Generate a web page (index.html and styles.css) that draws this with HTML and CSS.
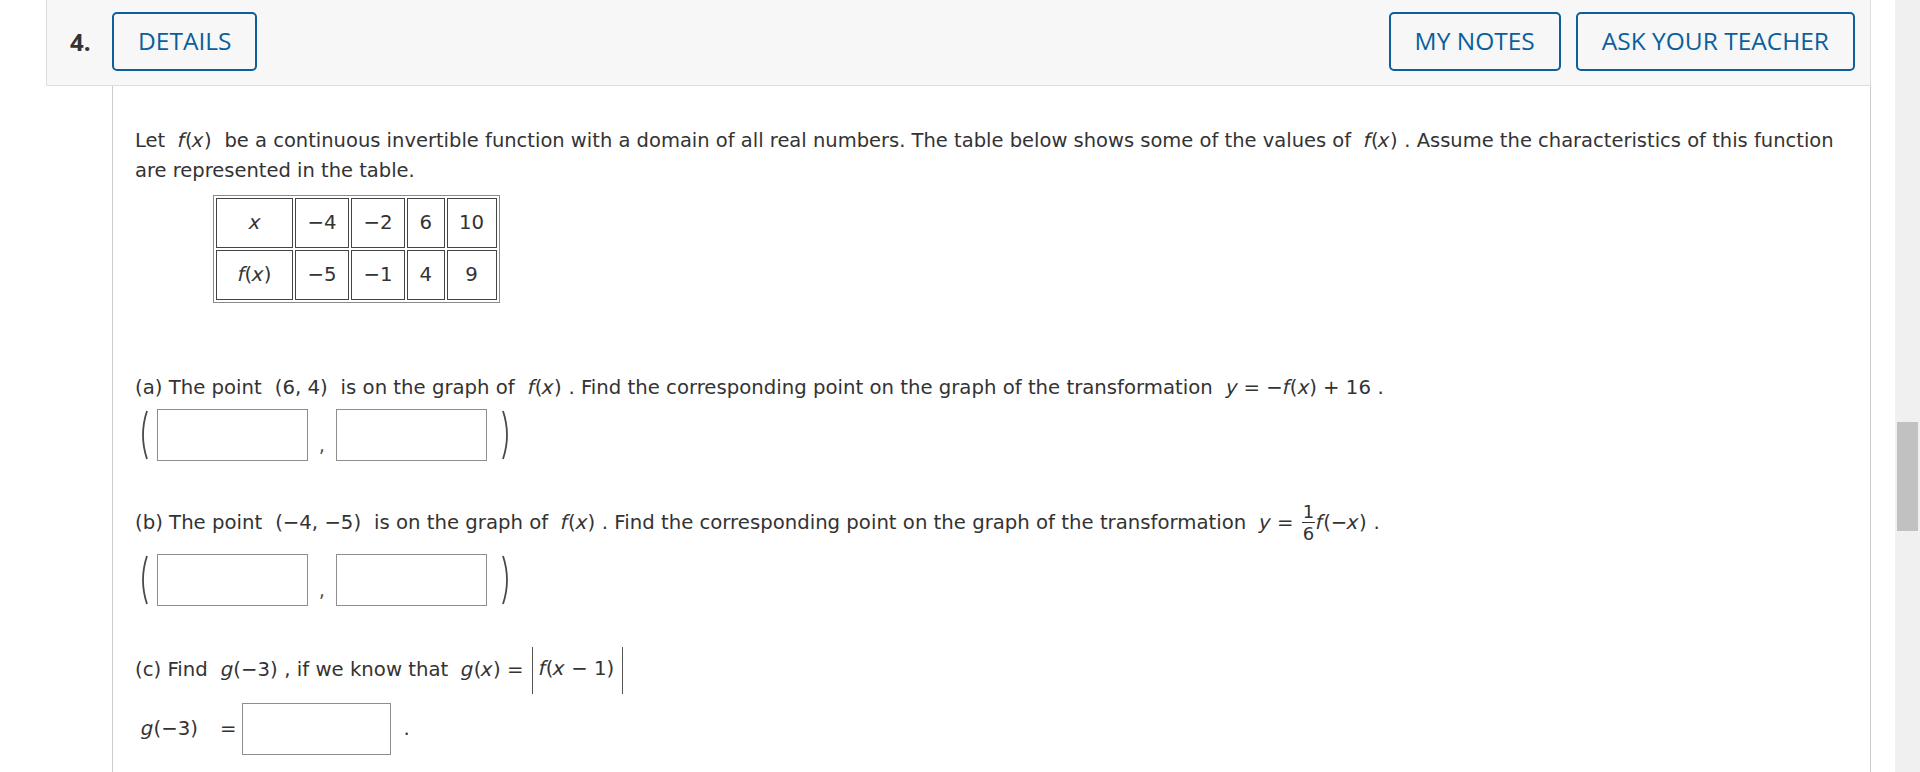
FILE: index.html
```html
<!DOCTYPE html>
<html lang="en">
<head>
<meta charset="utf-8">
<title>Question 4</title>
<link rel="stylesheet" href="styles.css">
</head>
<body>
<div class="page">
  <main class="question">
    <header class="q-head">
      <span class="q-num">4.</span>
      <button class="q-btn">DETAILS</button>
      <span class="spacer"></span>
      <button class="q-btn">MY NOTES</button>
      <button class="q-btn">ASK YOUR TEACHER</button>
    </header>
    <section class="q-body">
      <p class="para">Let <span class="m"><i>f</i>(<i>x</i>)</span> be a continuous invertible function with a domain of all real numbers. The table below shows some of the values of <span class="m"><i>f</i>(<i>x</i>)</span>. Assume the characteristics of this function are represented in the table.</p>
      <table class="vals">
        <tr><td class="head"><i>x</i></td><td>−4</td><td>−2</td><td>6</td><td>10</td></tr>
        <tr><td class="head"><i>f</i>(<i>x</i>)</td><td>−5</td><td>−1</td><td>4</td><td>9</td></tr>
      </table>

      <p class="part part-a">(a) The point <span class="m">(6, 4)</span> is on the graph of <span class="m"><i>f</i>(<i>x</i>)</span>. Find the corresponding point on the graph of the transformation <span class="m"><i>y</i> = −<i>f</i>(<i>x</i>) + 16</span>.</p>
      <div class="pair pair-a">
        <svg class="paren" viewBox="0 0 12 52" width="12" height="52"><path d="M9 2 Q1 26 9 50" fill="none" stroke="#4a4a4a" stroke-width="1.8"/></svg>
        <span class="box"></span>
        <span class="comma">,</span>
        <span class="box"></span>
        <svg class="paren" viewBox="0 0 12 52" width="12" height="52"><path d="M3 2 Q11 26 3 50" fill="none" stroke="#4a4a4a" stroke-width="1.8"/></svg>
      </div>

      <p class="part part-b">(b) The point <span class="m">(−4, −5)</span> is on the graph of <span class="m"><i>f</i>(<i>x</i>)</span>. Find the corresponding point on the graph of the transformation <span class="m"><i>y</i> = <span class="frac"><span class="num">1</span><span class="den">6</span></span><i>f</i>(−<i>x</i>)</span>.</p>
      <div class="pair pair-b">
        <svg class="paren" viewBox="0 0 12 52" width="12" height="52"><path d="M9 2 Q1 26 9 50" fill="none" stroke="#4a4a4a" stroke-width="1.8"/></svg>
        <span class="box"></span>
        <span class="comma">,</span>
        <span class="box"></span>
        <svg class="paren" viewBox="0 0 12 52" width="12" height="52"><path d="M3 2 Q11 26 3 50" fill="none" stroke="#4a4a4a" stroke-width="1.8"/></svg>
      </div>

      <p class="part part-c">(c) Find <span class="m"><i>g</i>(−3)</span>, if we know that <span class="m"><i>g</i>(<i>x</i>) = <span class="abs"><i>f</i>(<i>x</i> − 1)</span></span></p>
      <div class="answer-c">
        <span class="m"><i>g</i>(−3)</span>
        <span class="eq">=</span>
        <span class="box"></span>
        <span class="dot">.</span>
      </div>
    </section>
  </main>
  <div class="scrollbar"><div class="thumb"></div></div>
</div>
</body>
</html>
```

FILE: styles.css
```css
html, body {
  margin: 0;
  padding: 0;
  background: #ffffff;
}

.page {
  display: flex;
  height: 772px;
  overflow: hidden;
}

.question {
  margin-left: 46px;
  width: 1825px;
  flex: none;
}

.q-head {
  box-sizing: border-box;
  height: 86px;
  background: #f7f7f7;
  border: 1px solid #dddddd;
  border-top: none;
  display: flex;
  align-items: flex-start;
  padding: 12px 15px 0 23px;
  gap: 15px;
}

.q-num {
  font-family: "Open Sans", sans-serif;
  font-weight: 700;
  font-size: 24px;
  color: #333333;
  line-height: 59px;
  width: 27px;
}

.spacer {
  flex: 1;
}

.q-btn {
  box-sizing: border-box;
  height: 59px;
  padding: 0 24px;
  border: 2.5px solid #0b5f9c;
  border-radius: 5px;
  background: #f7f7f7;
  color: #0b5f9c;
  font-family: "Open Sans", sans-serif;
  font-size: 24.5px;
  line-height: 1;
}

.q-body {
  box-sizing: border-box;
  margin-left: 66px;
  width: 1759px;
  height: 686px;
  border-left: 1px solid #cccccc;
  border-right: 1px solid #cccccc;
  padding: 40px 8px 0 22px;
  font-family: "DejaVu Sans", Verdana, sans-serif;
  font-size: 19.7px;
  line-height: 29.5px;
  color: #333333;
}

.para, .part {
  margin: 0;
}

.para {
  font-size: 19.5px;
}

.m {
  margin: 0 0.34em;
}

i {
  font-style: normal;
  display: inline-block;
  transform: skewX(-13deg);
}

.vals {
  margin: 10px 0 0 78px;
  border: 1px solid #8a8a8a;
  border-spacing: 2px;
  font-size: 19.7px;
  color: #333333;
}

.vals td {
  border: 1px solid #444444;
  height: 48px;
  padding: 0 11.5px;
  text-align: center;
}

.vals td.head {
  width: 52px;
}

.part-a {
  margin-top: 70px;
}

.pair {
  display: flex;
  align-items: center;
  margin-left: 3px;
  height: 52px;
}

.pair-a {
  margin-top: 6px;
}

.pair-b {
  margin-top: 17px;
}

.part-b {
  margin-top: 47px;
}

.part-c {
  margin-top: 49px;
}

.paren {
  flex: none;
}

.box {
  box-sizing: border-box;
  width: 151px;
  height: 52px;
  border: 1px solid #8e8e8e;
  background: #ffffff;
  margin: 0 0 0 7px;
}

.pair .box + .paren {
  margin-left: 13px;
}

.comma {
  width: 14px;
  margin-left: 7px;
  text-align: center;
  align-self: flex-end;
  line-height: 30px;
  color: #555555;
}

.frac {
  display: inline-flex;
  flex-direction: column;
  vertical-align: middle;
  font-size: 18px;
  line-height: 18px;
  text-align: center;
  margin: -12px 1px -12px 2px;
}

.frac .num {
  border-bottom: 1.5px solid #333333;
  padding: 0 1px 1px;
}

.frac .den {
  padding-top: 2px;
}

.abs {
  display: inline-block;
  vertical-align: middle;
  height: 47px;
  line-height: 44px;
  border-left: 1.5px solid #555555;
  border-right: 1.5px solid #555555;
  padding: 0 8px 0 6px;
  margin: -10px 0 -10px 2px;
}

.answer-c {
  display: flex;
  align-items: center;
  margin-top: 18px;
  height: 52px;
}

.answer-c .m {
  margin: 0 0 0 6px;
}

.eq {
  margin-left: 22px;
}

.answer-c .box {
  margin-left: 6px;
  width: 149px;
}

.dot {
  margin-left: 12px;
}

.scrollbar {
  flex: none;
  margin-left: 24px;
  width: 25px;
  height: 772px;
  background: #f0f0f0;
  box-sizing: border-box;
  padding: 422px 2px 0 2px;
}

.thumb {
  height: 109px;
  background: #c1c1c1;
}
```
